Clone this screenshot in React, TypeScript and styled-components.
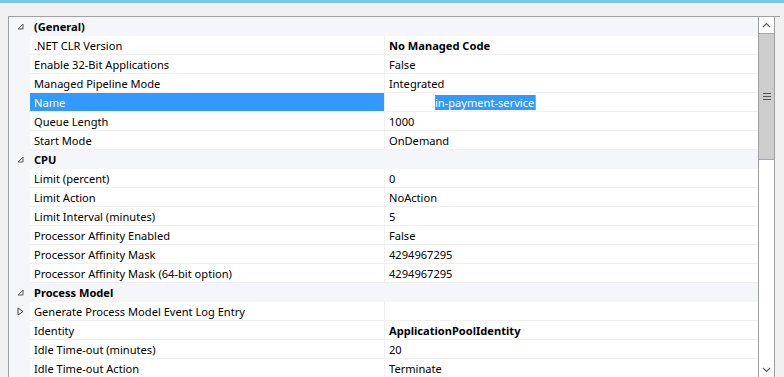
import React from "react";
import styled, { createGlobalStyle } from "styled-components";

const Global = createGlobalStyle`
  html, body { margin: 0; padding: 0; overflow: hidden; }
  body {
    background: #f0f0f0;
    font-family: "Noto Sans", "Open Sans", sans-serif;
    font-size: 11.1px;
    color: #000;
  }
`;

const TopBar = styled.div`
  height: 3px;
  background: #7ac5e9;
`;

const Page = styled.div`
  width: 784px;
  height: 377px;
  overflow: hidden;
`;

const Frame = styled.div`
  margin: 13px 0 0 8px;
  width: 771px;
  height: 361px;
  border-top: 1px solid #a0a0a0;
  border-left: 1px solid #a0a0a0;
  display: flex;
  overflow: hidden;
  background: #fff;
`;

const Grid = styled.div`
  flex: 1;
  display: grid;
  grid-template-columns: 21px 355px 1fr;
  grid-auto-rows: 19px;
  align-content: start;
`;

const Gutter = styled.div`
  background: #f4f6fa;
  display: flex;
  align-items: center;
  justify-content: center;
  padding-left: 1px;
  color: #555;
`;

const CatCell = styled.div`
  grid-column: 2 / 4;
  background: #f4f6fa;
  font-weight: bold;
  display: flex;
  align-items: center;
  padding: 1px 0 0 4px;
  line-height: 18px;
`;

const NameCell = styled.div<{ $sel?: boolean }>`
  display: flex;
  align-items: center;
  padding: 1px 0 0 4px;
  border-bottom: 1px solid #f0f0f0;
  border-right: 1px solid #f0f0f0;
  background: ${(p) => (p.$sel ? "#3399ff" : "#fff")};
  color: ${(p) => (p.$sel ? "#fff" : "#000")};
  white-space: nowrap;
  line-height: 17px;
`;

const ValueCell = styled.div<{ $bold?: boolean }>`
  display: flex;
  align-items: center;
  padding: 1px 0 0 4px;
  border-bottom: 1px solid #f0f0f0;
  font-weight: ${(p) => (p.$bold ? "bold" : "normal")};
  white-space: nowrap;
  line-height: 17px;
`;

const EditText = styled.span`
  margin-left: 46px;
  background: #3399ff;
  color: #fff;
  line-height: 15px;
  padding-right: 1px;
  border-right: 1px solid #e0a050;
`;

const Scroll = styled.div`
  width: 17px;
  flex: none;
  display: flex;
  flex-direction: column;
  border-left: 1px solid #a0a0a0;
  border-right: 1px solid #a0a0a0;
  box-sizing: border-box;
  background: #fff;
`;

const ArrowBtn = styled.div`
  height: 16px;
  flex: none;
  display: flex;
  align-items: center;
  justify-content: center;
  background: #fff;
`;

const Thumb = styled.div`
  height: 127px;
  flex: none;
  background: #cdcdcd;
  border-top: 1px solid #a8a8a8;
  border-bottom: 1px solid #a8a8a8;
  box-sizing: border-box;
  display: flex;
  align-items: center;
  justify-content: center;
`;

const Track = styled.div`
  flex: 1;
  background: #fff;
`;

const Right = styled.div`
  width: 5px;
  flex: none;
  background: #f0f0f0;
`;

type Row =
  | { kind: "cat"; label: string }
  | { kind: "prop"; label: string; value: string; bold?: boolean; sel?: boolean; collapsed?: boolean };

const rows: Row[] = [
  { kind: "cat", label: "(General)" },
  { kind: "prop", label: ".NET CLR Version", value: "No Managed Code", bold: true },
  { kind: "prop", label: "Enable 32-Bit Applications", value: "False" },
  { kind: "prop", label: "Managed Pipeline Mode", value: "Integrated" },
  { kind: "prop", label: "Name", value: "in-payment-service", sel: true },
  { kind: "prop", label: "Queue Length", value: "1000" },
  { kind: "prop", label: "Start Mode", value: "OnDemand" },
  { kind: "cat", label: "CPU" },
  { kind: "prop", label: "Limit (percent)", value: "0" },
  { kind: "prop", label: "Limit Action", value: "NoAction" },
  { kind: "prop", label: "Limit Interval (minutes)", value: "5" },
  { kind: "prop", label: "Processor Affinity Enabled", value: "False" },
  { kind: "prop", label: "Processor Affinity Mask", value: "4294967295" },
  { kind: "prop", label: "Processor Affinity Mask (64-bit option)", value: "4294967295" },
  { kind: "cat", label: "Process Model" },
  { kind: "prop", label: "Generate Process Model Event Log Entry", value: "", collapsed: true },
  { kind: "prop", label: "Identity", value: "ApplicationPoolIdentity", bold: true },
  { kind: "prop", label: "Idle Time-out (minutes)", value: "20" },
  { kind: "prop", label: "Idle Time-out Action", value: "Terminate" },
];

const Expanded = () => (
  <svg width="7" height="7" viewBox="0 0 7 7">
    <path d="M6 1 L6 6 L1 6 Z" fill="none" stroke="#555" strokeWidth="1" />
  </svg>
);

const Collapsed = () => (
  <svg width="7" height="9" viewBox="0 0 7 9">
    <path d="M1 1 L6 4.5 L1 8 Z" fill="none" stroke="#444" strokeWidth="1" />
  </svg>
);

const Chevron = ({ up }: { up?: boolean }) => (
  <svg width="9" height="6" viewBox="0 0 9 6">
    <path d={up ? "M1 5 L4.5 1.5 L8 5" : "M1 1 L4.5 4.5 L8 1"} fill="none" stroke="#606060" strokeWidth="1.2" />
  </svg>
);

const Grip = () => (
  <svg width="8" height="7" viewBox="0 0 8 7">
    <path d="M0 0.5 H8 M0 3.5 H8 M0 6.5 H8" stroke="#555" strokeWidth="1" />
  </svg>
);

export default function App() {
  return (
    <Page>
      <Global />
      <TopBar />
      <Frame>
        <Grid>
          {rows.map((r, i) =>
            r.kind === "cat" ? (
              <React.Fragment key={i}>
                <Gutter>
                  <Expanded />
                </Gutter>
                <CatCell>{r.label}</CatCell>
              </React.Fragment>
            ) : (
              <React.Fragment key={i}>
                <Gutter>{r.collapsed ? <Collapsed /> : null}</Gutter>
                <NameCell $sel={r.sel}>{r.label}</NameCell>
                <ValueCell $bold={r.bold}>
                  {r.sel ? <EditText>{r.value}</EditText> : r.value}
                </ValueCell>
              </React.Fragment>
            )
          )}
        </Grid>
        <Scroll>
          <ArrowBtn>
            <Chevron up />
          </ArrowBtn>
          <Thumb>
            <Grip />
          </Thumb>
          <Track />
          <ArrowBtn>
            <Chevron />
          </ArrowBtn>
        </Scroll>
        <Right />
      </Frame>
    </Page>
  );
}
